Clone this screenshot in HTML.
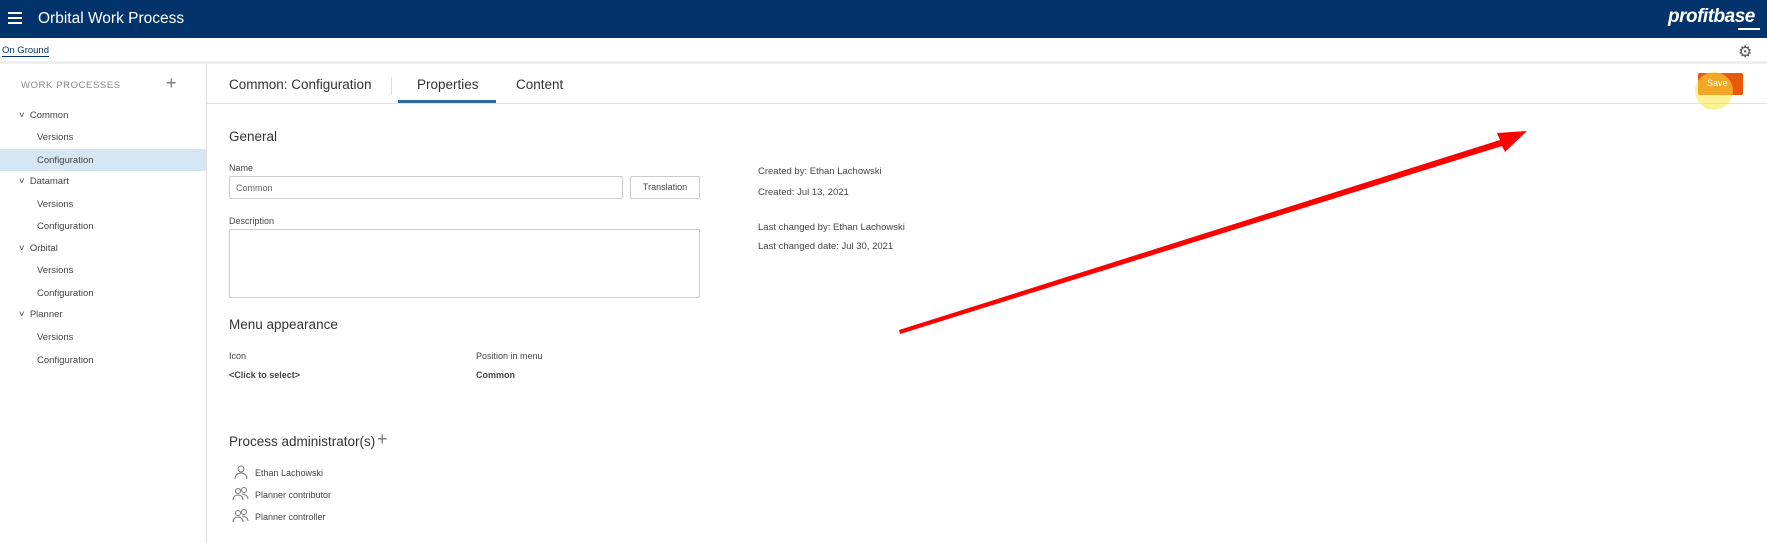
<!DOCTYPE html>
<html><head><meta charset="utf-8"><style>
*{margin:0;padding:0;box-sizing:border-box}
body{width:1767px;height:543px;overflow:hidden;background:#fff;font-family:"Liberation Sans",sans-serif;color:#333;position:relative}
.a{position:absolute;white-space:nowrap}
.hdr{position:absolute;left:0;top:0;width:1767px;height:38px;background:#03336b}
.s{font-size:9.5px;color:#444}
</style></head><body>
<div class="hdr"></div>
<div class="a" style="left:8px;top:12px;width:14px;height:2px;background:#fff;box-shadow:0 5px 0 #fff,0 10px 0 #fff"></div>
<div class="a" style="left:38px;top:10px;font-size:15.5px;color:#fff">Orbital Work Process</div>
<div class="a" style="left:1668px;top:6px;font-size:19px;color:#fff;font-style:italic;font-weight:bold;letter-spacing:-0.5px">profitbase</div>
<div class="a" style="left:1738px;top:28px;width:22px;height:2px;background:#fff"></div>
<div class="a" style="left:2px;top:45px;font-size:9.5px;color:#03336b;border-bottom:1px solid #03336b">On Ground</div>
<div class="a" style="left:1738px;top:42px;font-size:16px;color:#555">⚙</div>
<div class="a" style="left:0;top:61px;width:1767px;height:3px;background:#eee"></div>
<div class="a" style="left:206px;top:64px;width:1px;height:479px;background:#ddd"></div>
<div class="a" style="left:21px;top:80px;font-size:9.5px;color:#888;letter-spacing:0.6px">WORK PROCESSES</div>
<div class="a" style="left:166px;top:73px;font-size:18px;color:#777;font-weight:300">+</div>
<div class="a" style="left:0;top:149px;width:206px;height:22px;background:#d5e6f4"></div>
<div class="a s" style="left:19px;top:110px">˅ &nbsp;Common</div>
<div class="a s" style="left:37px;top:132px">Versions</div>
<div class="a s" style="left:37px;top:155px">Configuration</div>
<div class="a s" style="left:19px;top:176px">˅ &nbsp;Datamart</div>
<div class="a s" style="left:37px;top:199px">Versions</div>
<div class="a s" style="left:37px;top:221px">Configuration</div>
<div class="a s" style="left:19px;top:243px">˅ &nbsp;Orbital</div>
<div class="a s" style="left:37px;top:265px">Versions</div>
<div class="a s" style="left:37px;top:288px">Configuration</div>
<div class="a s" style="left:19px;top:309px">˅ &nbsp;Planner</div>
<div class="a s" style="left:37px;top:332px">Versions</div>
<div class="a s" style="left:37px;top:355px">Configuration</div>
<div class="a" style="left:229px;top:77px;font-size:13.5px;color:#333">Common: Configuration</div>
<div class="a" style="left:391px;top:77px;width:1px;height:18px;background:#ddd"></div>
<div class="a" style="left:417px;top:77px;font-size:13.5px;color:#333">Properties</div>
<div class="a" style="left:516px;top:77px;font-size:13.5px;color:#333">Content</div>
<div class="a" style="left:207px;top:103px;width:1560px;height:1px;background:#e2e2e2"></div>
<div class="a" style="left:398px;top:100px;width:98px;height:3px;background:#2d6a9f"></div>
<div class="a" style="left:1698px;top:73px;width:45px;height:22px;background:#e8590c;border-radius:2px"></div>
<div class="a" style="left:1695px;top:72px;width:38px;height:38px;border-radius:50%;background:rgba(250,230,60,0.55)"></div>
<div class="a" style="left:1707px;top:78px;font-size:9px;color:#fff">Save</div>
<div class="a" style="left:229px;top:129px;font-size:13.5px;color:#333">General</div>
<div class="a s" style="left:229px;top:163px;font-size:9px">Name</div>
<div class="a" style="left:229px;top:176px;width:394px;height:23px;border:1px solid #ccc;border-radius:2px"></div>
<div class="a s" style="left:236px;top:183px;font-size:9px;color:#666">Common</div>
<div class="a" style="left:630px;top:176px;width:70px;height:23px;border:1px solid #ccc;border-radius:2px;font-size:9px;text-align:center;line-height:21px;color:#444">Translation</div>
<div class="a s" style="left:229px;top:216px;font-size:9px">Description</div>
<div class="a" style="left:229px;top:229px;width:471px;height:69px;border:1px solid #ccc;border-radius:2px"></div>
<div class="a s" style="left:758px;top:166px">Created by: Ethan Lachowski</div>
<div class="a s" style="left:758px;top:187px">Created: Jul 13, 2021</div>
<div class="a s" style="left:758px;top:222px">Last changed by: Ethan Lachowski</div>
<div class="a s" style="left:758px;top:241px">Last changed date: Jul 30, 2021</div>
<div class="a" style="left:229px;top:317px;font-size:13.5px;color:#333">Menu appearance</div>
<div class="a s" style="left:229px;top:351px;font-size:9px">Icon</div>
<div class="a s" style="left:229px;top:370px;font-size:9px;font-weight:bold">&lt;Click to select&gt;</div>
<div class="a s" style="left:476px;top:351px;font-size:9px">Position in menu</div>
<div class="a s" style="left:476px;top:370px;font-size:9px;font-weight:bold">Common</div>
<div class="a" style="left:229px;top:434px;font-size:13.5px;color:#333">Process administrator(s)</div>
<div class="a" style="left:377px;top:429px;font-size:18px;color:#777">+</div>
<svg class="a" style="left:0;top:0" width="1767" height="543" fill="none" stroke="#777" stroke-width="1">
<circle cx="241" cy="469" r="3"/><path d="M235 479c0-4 3-6 6-6s6 2 6 6"/>
<circle cx="238" cy="491" r="2.5"/><path d="M233 500c0-3 2-5 5-5s5 2 5 5"/><circle cx="244" cy="490" r="2.5"/><path d="M242 494c3 0 6 2 6 5"/>
<circle cx="238" cy="513" r="2.5"/><path d="M233 522c0-3 2-5 5-5s5 2 5 5"/><circle cx="244" cy="512" r="2.5"/><path d="M242 516c3 0 6 2 6 5"/>
</svg>
<div class="a s" style="left:255px;top:468px;font-size:9px">Ethan Lachowski</div>
<div class="a s" style="left:255px;top:490px;font-size:9px">Planner contributor</div>
<div class="a s" style="left:255px;top:512px;font-size:9px">Planner controller</div>
<svg class="a" style="left:0;top:0" width="1767" height="543"><polygon points="899,330 1500,140 1497,133 1527,131 1505,152 1502,146 900,334" fill="#f00"/></svg>
</body></html>
